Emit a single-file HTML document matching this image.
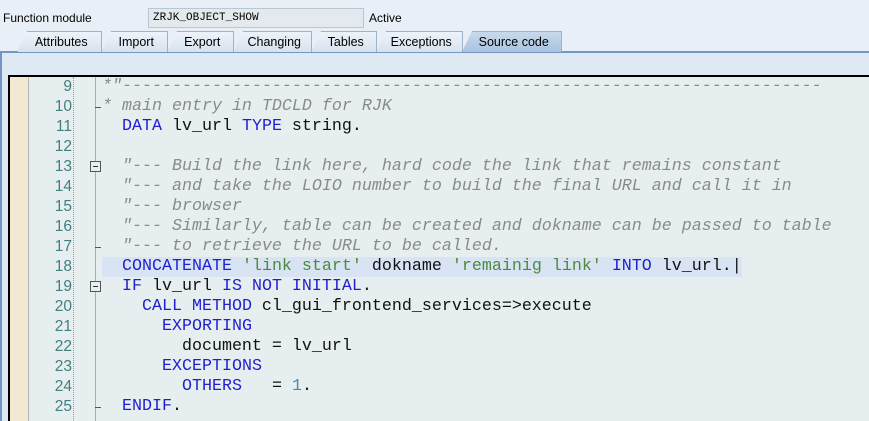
<!DOCTYPE html>
<html><head><style>
*{margin:0;padding:0;box-sizing:border-box}
body{width:869px;height:421px;overflow:hidden;background:#e8eff6;font-family:"Liberation Sans",sans-serif;position:relative}
.lbl{position:absolute;font-size:12px;color:#000}
.fld{position:absolute;left:148px;top:8px;width:216px;height:20px;background:#e4e9ee;border:1px solid #b9c6d3;font-family:"Liberation Mono",monospace;font-size:11px;padding:3px 4px}
.tab{position:absolute;top:31px;height:21px;background:linear-gradient(#eef3f9,#d7e2ee);border:1px solid #9cb3cc;border-bottom:none;font-size:12.5px;text-align:center;line-height:20px;clip-path:polygon(10px 0,100% 0,100% 100%,0 100%)}
.tab.act{background:linear-gradient(#c8d9ec,#a9c3e0)}
.panel{position:absolute;left:0;top:51px;width:869px;height:370px;border-top:2px solid #7396c2;border-left:2px solid #7396c2;background:#dfe9f3}
.ed{position:absolute;left:8px;top:75px;width:861px;height:346px;border-top:2px solid #000;border-left:2px solid #000;background:#e7eef0;overflow:hidden}
.ym{position:absolute;left:0;top:0;width:19px;height:100%;background:#f3e9d3;border-right:1px solid #b0b8bc}
.dot{position:absolute;left:63px;top:0;height:100%;border-left:1px dotted #7aa;}
.fl{position:absolute;left:85px;top:0;height:100%;border-left:1px solid #aab}
.ln{position:absolute;left:20px;width:42px;text-align:right;font-family:"Liberation Sans",sans-serif;font-size:15.5px;color:#3f7f7f}
.cd{position:absolute;left:92px;font-family:"Liberation Mono",monospace;font-size:16.67px;color:#111;white-space:pre}
.c{color:#8a8a8a;font-style:italic}
.k{color:#1f1fd0}
.s{color:#4b8b3b}
.n{color:#3a8fbf}
.hl{position:absolute;left:92px;top:180px;width:640px;height:20px;background:#d8e4f3}
.fb{position:absolute;left:80px;width:11px;height:11px;border:1px solid #555;background:#e7eef0}
.fb:after{content:"";position:absolute;left:2px;top:4px;width:5px;height:1px;background:#333}
.tk{position:absolute;left:85px;width:6px;height:1px;background:#555}
</style></head><body>
<div class="lbl" style="left:3px;top:11px">Function module</div>
<div class="fld">ZRJK_OBJECT_SHOW</div>
<div class="lbl" style="left:369px;top:11px">Active</div>
<div class="panel"></div>
<div class="tab" style="left:17px;width:85px">&nbsp;Attributes</div>
<div class="tab" style="left:101px;width:67px">&nbsp;Import</div>
<div class="tab" style="left:167px;width:67px">&nbsp;Export</div>
<div class="tab" style="left:233px;width:79px">&nbsp;Changing</div>
<div class="tab" style="left:311px;width:66px">&nbsp;Tables</div>
<div class="tab" style="left:376px;width:87px">&nbsp;Exceptions</div>
<div class="tab act" style="left:462px;width:100px">&nbsp;Source code</div>
<div class="ed">
<div class="ym"></div>
<div class="hl"></div>
<div class="dot"></div>
<div class="fl"></div>
<div class="ln" style="top:1px">9</div>
<div class="ln" style="top:21px">10</div>
<div class="ln" style="top:41px">11</div>
<div class="ln" style="top:61px">12</div>
<div class="ln" style="top:81px">13</div>
<div class="ln" style="top:101px">14</div>
<div class="ln" style="top:121px">15</div>
<div class="ln" style="top:141px">16</div>
<div class="ln" style="top:161px">17</div>
<div class="ln" style="top:181px">18</div>
<div class="ln" style="top:201px">19</div>
<div class="ln" style="top:221px">20</div>
<div class="ln" style="top:241px">21</div>
<div class="ln" style="top:261px">22</div>
<div class="ln" style="top:281px">23</div>
<div class="ln" style="top:301px">24</div>
<div class="ln" style="top:321px">25</div>
<div class="tk" style="top:30px"></div>
<div class="fb" style="top:84px"></div>
<div class="tk" style="top:170px"></div>
<div class="fb" style="top:204px"></div>
<div class="tk" style="top:330px"></div>
<div class="cd c" style="top:0px">*"----------------------------------------------------------------------</div>
<div class="cd c" style="top:20px">* main entry in TDCLD for RJK</div>
<div class="cd" style="top:40px">  <span class="k">DATA</span> lv_url <span class="k">TYPE</span> string.</div>
<div class="cd c" style="top:80px">  "--- Build the link here, hard code the link that remains constant</div>
<div class="cd c" style="top:100px">  "--- and take the LOIO number to build the final URL and call it in</div>
<div class="cd c" style="top:120px">  "--- browser</div>
<div class="cd c" style="top:140px">  "--- Similarly, table can be created and dokname can be passed to table</div>
<div class="cd c" style="top:160px">  "--- to retrieve the URL to be called.</div>
<div class="cd" style="top:180px">  <span class="k">CONCATENATE</span> <span class="s">'link start'</span> dokname <span class="s">'remainig link'</span> <span class="k">INTO</span> lv_url.|</div>
<div class="cd" style="top:200px">  <span class="k">IF</span> lv_url <span class="k">IS NOT INITIAL</span>.</div>
<div class="cd" style="top:220px">    <span class="k">CALL METHOD</span> cl_gui_frontend_services=&gt;execute</div>
<div class="cd" style="top:240px">      <span class="k">EXPORTING</span></div>
<div class="cd" style="top:260px">        document = lv_url</div>
<div class="cd" style="top:280px">      <span class="k">EXCEPTIONS</span></div>
<div class="cd" style="top:300px">        <span class="k">OTHERS</span>   = <span class="n">1</span>.</div>
<div class="cd" style="top:320px">  <span class="k">ENDIF</span>.</div>
</div>
</body></html>
